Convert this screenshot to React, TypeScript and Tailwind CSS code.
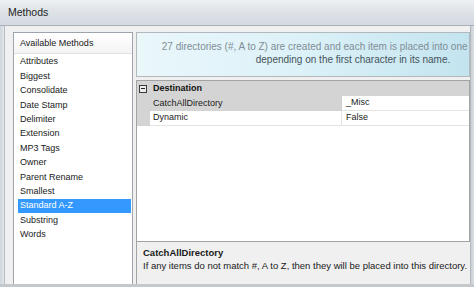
const methods = [
  "Attributes",
  "Biggest",
  "Consolidate",
  "Date Stamp",
  "Delimiter",
  "Extension",
  "MP3 Tags",
  "Owner",
  "Parent Rename",
  "Smallest",
  "Standard A-Z",
  "Substring",
  "Words",
];

const selected = "Standard A-Z";

function MethodList() {
  return (
    <div className="w-[120px] shrink-0 flex flex-col bg-white border border-[#9ea4ab] border-b-0">
      {/* header */}
      <div className="h-[21px] shrink-0 flex items-center pl-[6px] pt-[1px] bg-gradient-to-b from-white to-[#f4f4f4] border-b border-[#e2e2e2] text-[#1a1a1a]">
        Available Methods
      </div>
      <div className="flex flex-col pl-[4px] pr-[1px] pt-[1px]">
        {methods.map((m) => (
          <div
            key={m}
            className={`h-[14.4px] flex items-center pl-[2px] ${
              m === selected ? "bg-[#3399ff] text-white" : "text-[#1a1a1a]"
            }`}
          >
            {m}
          </div>
        ))}
      </div>
    </div>
  );
}

function PropertyGrid() {
  return (
    <div className="h-[162px] shrink-0 flex flex-col bg-white border border-[#a3a3a3] mt-[3px]">
      {/* category */}
      <div className="h-[15px] flex items-center bg-[#d4d4d4]">
        <div className="w-[13px] flex items-center pl-[2px]">
          <div className="w-[8px] h-[8px] border border-[#3a3a3a] bg-[#ececec] flex items-center justify-center">
            <div className="w-[4px] h-[1px] bg-[#222]" />
          </div>
        </div>
        <span className="pl-[3px] font-bold text-[#111]">Destination</span>
      </div>
      {/* rows */}
      <div className="h-[15px] flex">
        <div className="w-[13px] bg-[#d4d4d4]" />
        <div className="w-[192px] flex items-center pl-[3px] bg-[#d4d4d4] text-[#1a1a1a] border-r border-[#cfcfcf]">
          CatchAllDirectory
        </div>
        <div className="flex-1 flex items-center pl-[4px] border-b border-[#e3e3e3] text-[#1a1a1a]">_Misc</div>
      </div>
      <div className="h-[15px] flex">
        <div className="w-[13px] bg-[#d4d4d4]" />
        <div className="w-[192px] flex items-center pl-[3px] border-b border-r border-[#e3e3e3] text-[#1a1a1a]">
          Dynamic
        </div>
        <div className="flex-1 flex items-center pl-[4px] border-b border-[#e3e3e3] text-[#1a1a1a]">False</div>
      </div>
      <div className="flex-1" />
    </div>
  );
}

export default function App() {
  return (
    <div className="w-[474px] h-[287px] overflow-hidden flex flex-col bg-[#d2d7dd] font-['Liberation_Sans',Arial,sans-serif] text-[9px]">
      {/* title bar */}
      <div className="h-[26px] shrink-0 flex items-center pl-[8px] bg-gradient-to-b from-[#eef0f3] via-[#dde2e7] to-[#d3d9df] border-b border-[#a9b0b8] text-[10.5px] text-[#1e1e1e]">
        Methods
      </div>

      <div className="flex flex-1 min-h-0">
        <div className="w-[5px] shrink-0 bg-gradient-to-r from-[#cfd5db] to-[#e2e6ea] border-r border-[#b7bdc4]" />

        <div className="flex-1 min-w-0 flex gap-[3px] bg-[#f0f0f0] pt-[6px] pl-[8px]">
          <MethodList />

          <div className="flex-1 min-w-0 flex flex-col">
            {/* description */}
            <div className="h-[45px] shrink-0 overflow-hidden border border-[#b3b8bd] bg-gradient-to-r from-[#eaf7fb] via-[#dcf1f8] to-[#c3e4ef]">
              <div className="w-[432px] pt-[7px] text-center text-[10px] leading-[13px] whitespace-nowrap">
                <div className="text-[#7f8d96]">
                  27 directories (#, A to Z) are created and each item is placed into one of the directories
                </div>
                <div className="text-[#46535b]">depending on the first character in its name.</div>
              </div>
            </div>

            <PropertyGrid />

            {/* help */}
            <div className="flex-1 bg-[#f0f0f0] border-l border-[#a3a3a3] pl-[6px] pt-[4px] text-[9.5px] leading-[13px] text-[#1a1a1a]">
              <div className="font-bold">CatchAllDirectory</div>
              <div>If any items do not match #, A to Z, then they will be placed into this directory.</div>
            </div>
          </div>
        </div>

        <div className="w-[4px] shrink-0 bg-gradient-to-r from-[#c9ced4] to-[#dde1e5] border-l border-[#b3b9c0]" />
      </div>

      <div className="h-[3px] shrink-0 bg-[#c3c8cd]" />
    </div>
  );
}
